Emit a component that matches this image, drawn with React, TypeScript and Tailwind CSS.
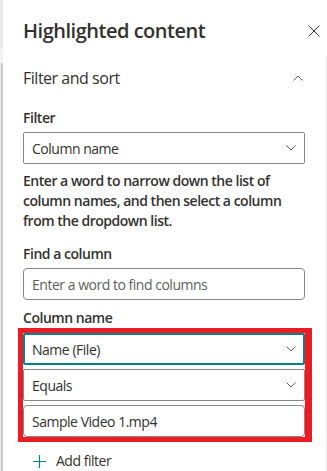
const font = { fontFamily: '"Open Sans", "Noto Sans", sans-serif' };

function Chevron({ up = false }: { up?: boolean }) {
  return (
    <svg width="10" height="6" viewBox="0 0 10 6" fill="none" className="shrink-0">
      <polyline
        points={up ? "0.5,5.5 5,1 9.5,5.5" : "0.5,0.5 5,5 9.5,0.5"}
        stroke="#605e5c"
        strokeWidth="1"
      />
    </svg>
  );
}

function Dropdown({ value, focused = false }: { value: string; focused?: boolean }) {
  return (
    <div
      className={
        focused
          ? "flex h-8 items-center justify-between rounded-[2px] border-2 border-[#038387] bg-white pl-[7px] pr-[7px]"
          : "flex h-8 items-center justify-between rounded-[2px] border border-[#8a8886] bg-white pl-2 pr-2"
      }
    >
      <span className="text-[14px] text-[#323130]">{value}</span>
      <Chevron />
    </div>
  );
}

function TextField({ value, placeholder }: { value?: string; placeholder?: string }) {
  return (
    <div className="flex h-8 items-center rounded-[4px] border border-[#8a8886] bg-white px-2">
      <span className={value ? "text-[14px] text-[#323130]" : "text-[14px] text-[#605e5c]"}>
        {value ?? placeholder}
      </span>
    </div>
  );
}

function Label({ children, className = "" }: { children: React.ReactNode; className?: string }) {
  return (
    <div className={"text-[14px] font-semibold leading-[20px] text-[#323130] " + className}>
      {children}
    </div>
  );
}

export default function App() {
  return (
    <div className="flex h-screen w-full overflow-hidden bg-white tracking-[-0.03em]" style={font}>
      <div className="flex w-[3px] shrink-0 flex-col">
        <div className="h-[47px] bg-[#e9e9e9]" />
        <div className="h-[16px] bg-[#f4f4f4]" />
        <div className="flex flex-1">
          <div className="w-px bg-[#eeeeee]" />
          <div className="w-[2px] bg-[#c8c8c8]" />
        </div>
      </div>

      <div className="flex min-w-0 flex-1 flex-col">
        <div className="flex items-center justify-between pl-5 pr-[6px] pt-4">
          <h1 className="text-[20px] font-semibold leading-[30px] text-[#323130]">
            Highlighted content
          </h1>
          <svg width="12" height="12" viewBox="0 0 12 12" fill="none">
            <path d="M0.5 0.5 L11.5 11.5 M11.5 0.5 L0.5 11.5" stroke="#323130" strokeWidth="1" />
          </svg>
        </div>

        <div className="flex flex-col pl-5 pr-[21px]">
          <div className="mt-5 flex h-6 items-center justify-between pr-[2px]">
            <span className="text-[16px] leading-[24px] text-[#323130]">Filter and sort</span>
            <Chevron up />
          </div>

          <Label className="mt-[18px]">Filter</Label>
          <div className="mt-1">
            <Dropdown value="Column name" />
          </div>

          <p className="mt-[7px] text-[14px] font-semibold leading-[20px] text-[#323130]">
            Enter a word to narrow down the list of column names, and then select a column from
            the dropdown list.
          </p>

          <Label className="mt-[13px]">Find a column</Label>
          <div className="mt-1">
            <TextField placeholder="Enter a word to find columns" />
          </div>

          <Label className="mt-2">Column name</Label>
          <div className="-ml-[5px] -mr-[7px] flex flex-col gap-1 border-[5px] border-r-[7px] border-[#ed1c24]">
            <Dropdown value="Name (File)" focused />
            <Dropdown value="Equals" />
            <TextField value="Sample Video 1.mp4" />
          </div>

          <div className="mt-[9px] flex h-5 items-center gap-[10px] pl-[10px]">
            <svg width="13" height="13" viewBox="0 0 13 13" fill="none">
              <path d="M6.5 0 V13 M0 6.5 H13" stroke="#038387" strokeWidth="1.2" />
            </svg>
            <span className="text-[14px] leading-[20px] text-[#323130]">Add filter</span>
          </div>
        </div>
      </div>

      <div className="flex w-px shrink-0 flex-col">
        <div className="h-[56px]" />
        <div className="flex-1 bg-[#ededed]" />
      </div>
    </div>
  );
}
